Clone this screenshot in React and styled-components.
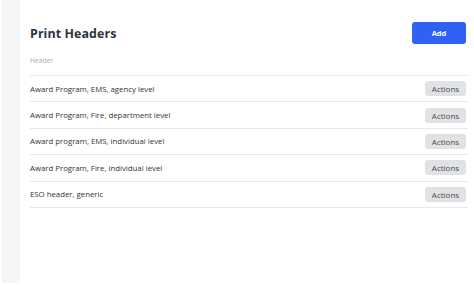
import React from 'react'
import styled, {createGlobalStyle} from 'styled-components'

const GlobalStyle = createGlobalStyle`
  html, body {
    margin: 0;
    padding: 0;
    background: #ffffff;
    font-family: 'Open Sans', 'Liberation Sans', sans-serif;
  }
`

const Layout = styled.div`
  display: flex;
  width: 474px;
  height: 286px;
  background: #ffffff;
`

const Sidebar = styled.div`
  width: 18px;
  height: 283px;
  margin-left: 2px;
  background: #f6f6f9;
`

const Main = styled.div`
  flex: 1;
  padding: 22px 6px 0 10px;
`

const TopBar = styled.div`
  display: flex;
  align-items: center;
  justify-content: space-between;
  height: 22px;
`

const Title = styled.h1`
  margin: 0;
  font-size: 12.4px;
  font-weight: 700;
  color: #2b3440;
  letter-spacing: 0.1px;
`

const AddButton = styled.button`
  width: 54px;
  height: 22px;
  margin-right: 2px;
  border: none;
  border-radius: 3px;
  background: #2f62f4;
  color: #ffffff;
  font-family: inherit;
  font-size: 7.5px;
  font-weight: 700;
`

const HeadLabel = styled.div`
  margin-top: 13px;
  height: 18px;
  font-size: 6.8px;
  color: #a9adb2;
  border-bottom: 1px solid #e7e8ea;
  line-height: 8px;
`

const List = styled.ul`
  list-style: none;
  margin: 0;
  padding: 0;
`

const Row = styled.li`
  display: flex;
  align-items: center;
  justify-content: space-between;
  height: 25.4px;
  border-bottom: 1px solid #e7e8ea;
  font-size: 7.8px;
  color: #2e3338;
`

const ActionsButton = styled.button`
  width: 41px;
  height: 15px;
  margin-right: 2px;
  border: none;
  border-radius: 3px;
  background: #e1e2e4;
  color: #474c52;
  font-family: inherit;
  font-size: 8px;
  font-weight: 500;
  padding: 0;
`

const headers = [
  'Award Program, EMS, agency level',
  'Award Program, Fire, department level',
  'Award program, EMS, individual level',
  'Award Program, Fire, individual level',
  'ESO header, generic',
]

const App = () => (
  <Layout>
    <GlobalStyle />
    <Sidebar />
    <Main>
      <TopBar>
        <Title>Print Headers</Title>
        <AddButton>Add</AddButton>
      </TopBar>
      <HeadLabel>Header</HeadLabel>
      <List>
        {headers.map(h => (
          <Row key={h}>
            <span>{h}</span>
            <ActionsButton>Actions</ActionsButton>
          </Row>
        ))}
      </List>
    </Main>
  </Layout>
)

export default App
